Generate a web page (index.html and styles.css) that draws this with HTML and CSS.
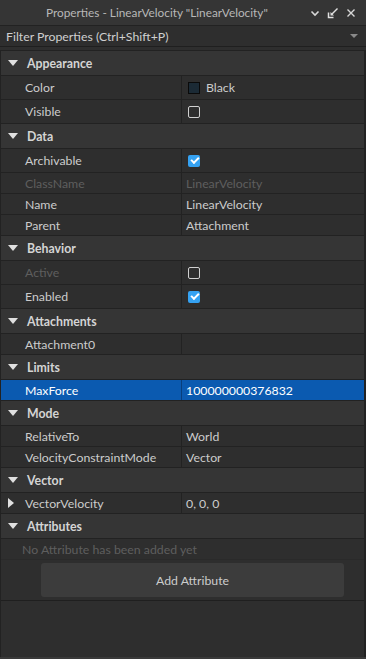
FILE: index.html
```html
<!DOCTYPE html>
<html lang="en">
<head>
    <meta charset="UTF-8">
    <meta name="viewport" content="width=device-width, initial-scale=1.0">
    <title>Properties - LinearVelocity</title>
    <link rel="stylesheet" href="styles.css">
</head>
<body>
    <div class="panel">
        <div class="titlebar">
            <span class="title">Properties - LinearVelocity "LinearVelocity"</span>
            <div class="title-icons">
                <svg width="10" height="8" viewBox="0 0 10 8"><path d="M1.5 2.5 L5 6 L8.5 2.5" fill="none" stroke="#d8d8d8" stroke-width="1.6"/></svg>
                <svg width="12" height="12" viewBox="0 0 12 12"><path d="M1.5 5.5 V10.5 H6.5" fill="none" stroke="#e0e0e0" stroke-width="1.5"/><path d="M3.5 5 V8.5 H7 Z" fill="#e0e0e0"/><path d="M4.5 7.5 L10.5 1.5" stroke="#e0e0e0" stroke-width="1.5"/></svg>
                <svg width="10" height="10" viewBox="0 0 10 10"><path d="M1.5 1.5 L8.5 8.5 M8.5 1.5 L1.5 8.5" stroke="#d8d8d8" stroke-width="1.4"/></svg>
            </div>
        </div>

        <div class="filter">
            <span>Filter Properties (Ctrl+Shift+P)</span>
            <span class="filter-arrow"></span>
        </div>

        <div class="list">
            <div class="section"><span class="caret"></span>Appearance</div>
            <div class="row tall">
                <div class="name">Color</div>
                <div class="value"><span class="swatch"></span>Black</div>
            </div>
            <div class="row tall">
                <div class="name">Visible</div>
                <div class="value"><span class="check"></span></div>
            </div>

            <div class="section"><span class="caret"></span>Data</div>
            <div class="row tall">
                <div class="name">Archivable</div>
                <div class="value"><span class="check on"></span></div>
            </div>
            <div class="row disabled">
                <div class="name">ClassName</div>
                <div class="value">LinearVelocity</div>
            </div>
            <div class="row">
                <div class="name">Name</div>
                <div class="value">LinearVelocity</div>
            </div>
            <div class="row">
                <div class="name">Parent</div>
                <div class="value">Attachment</div>
            </div>

            <div class="section"><span class="caret"></span>Behavior</div>
            <div class="row tall">
                <div class="name dim">Active</div>
                <div class="value"><span class="check"></span></div>
            </div>
            <div class="row tall">
                <div class="name">Enabled</div>
                <div class="value"><span class="check on"></span></div>
            </div>

            <div class="section"><span class="caret"></span>Attachments</div>
            <div class="row">
                <div class="name">Attachment0</div>
                <div class="value"></div>
            </div>

            <div class="section"><span class="caret"></span>Limits</div>
            <div class="row selected">
                <div class="name">MaxForce</div>
                <div class="value">100000000376832</div>
            </div>

            <div class="section"><span class="caret"></span>Mode</div>
            <div class="row">
                <div class="name">RelativeTo</div>
                <div class="value">World</div>
            </div>
            <div class="row">
                <div class="name">VelocityConstraintMode</div>
                <div class="value">Vector</div>
            </div>

            <div class="section"><span class="caret"></span>Vector</div>
            <div class="row">
                <div class="name"><span class="caret right"></span>VectorVelocity</div>
                <div class="value">0, 0, 0</div>
            </div>

            <div class="section"><span class="caret"></span>Attributes</div>
            <div class="empty-note">No Attribute has been added yet</div>
            <div class="add-row">
                <button class="add-btn">Add Attribute</button>
            </div>
        </div>
        <div class="rest"></div>
    </div>
</body>
</html>
```

FILE: styles.css
```css
html, body {
    margin: 0;
    padding: 0;
}
body {
    width: 366px;
    height: 659px;
    background: #3a3a3a;
    font-family: 'Lato', 'Noto Sans', sans-serif;
    font-size: 12.3px;
    color: #cccccc;
    overflow: hidden;
}
.panel {
    width: 366px;
    height: 657px;
    display: flex;
    flex-direction: column;
    background: #2e2e2e;
}
.titlebar {
    height: 26px;
    background: #353535;
    border-bottom: 1px solid #222222;
    display: flex;
    align-items: center;
    justify-content: space-between;
    box-sizing: border-box;
    padding: 0 10px 0 46px;
}
.title {
    color: #b8b8b8;
    font-size: 11.8px;
}
.title-icons {
    display: flex;
    align-items: center;
    gap: 7px;
}
.filter {
    height: 20px;
    background: #2e2e2e;
    border-bottom: 1px solid #1f1f1f;
    display: flex;
    align-items: center;
    justify-content: space-between;
    padding: 0 8px 0 6px;
    color: #d0d0d0;
}
.filter-arrow {
    width: 0;
    height: 0;
    border-left: 4px solid transparent;
    border-right: 4px solid transparent;
    border-top: 4px solid #8a8a8a;
}
.list {
    margin-top: 3px;
    border-top: 1px solid #222222;
    border-left: 1px solid #222222;
    border-right: 2px solid #222222;
}
.section {
    height: 24px;
    background: #353535;
    border-bottom: 1px solid #222222;
    display: flex;
    align-items: center;
    font-weight: bold;
    color: #d4d4d4;
}
.caret {
    width: 0;
    height: 0;
    border-left: 5px solid transparent;
    border-right: 5px solid transparent;
    border-top: 6px solid #e0e0e0;
    margin: 0 9px 0 7px;
}
.caret.right {
    border-top: 5px solid transparent;
    border-bottom: 5px solid transparent;
    border-left: 6px solid #e0e0e0;
    border-right: none;
    margin: 0 11px 0 -17px;
}
.row {
    height: 20px;
    display: flex;
    border-bottom: 1px solid #222222;
    background: #2e2e2e;
}
.row.tall {
    height: 23px;
}
.name {
    width: 156px;
    padding-left: 24px;
    border-right: 1px solid #222222;
    display: flex;
    align-items: center;
}
.value {
    flex: 1;
    padding-left: 4px;
    display: flex;
    align-items: center;
}
.disabled .name, .disabled .value, .name.dim {
    color: #5e5e5e;
}
.selected {
    background: #0b5ab0;
    color: #ffffff;
}
.selected .name {
    border-right-color: #093f7c;
}
.swatch {
    width: 10px;
    height: 10px;
    background: #1b2a35;
    border: 1px solid #0a0a0a;
    margin: 0 6px 0 2px;
}
.check {
    width: 10px;
    height: 10px;
    border: 1px solid #d0d0d0;
    border-radius: 2px;
    margin-left: 2px;
    position: relative;
}
.check.on {
    width: 12px;
    height: 12px;
    border: none;
    background: #35a2f2;
}
.check.on::after {
    content: "";
    position: absolute;
    left: 3px;
    top: 2px;
    width: 6px;
    height: 3px;
    border-left: 2px solid #ffffff;
    border-bottom: 2px solid #ffffff;
    transform: rotate(-45deg);
}
.empty-note {
    height: 20px;
    display: flex;
    align-items: center;
    padding-left: 21px;
    color: #5e5e5e;
    border-bottom: 1px solid #2a2a2a;
}
.add-row {
    height: 40px;
    display: flex;
    align-items: center;
    padding-left: 40px;
    border-bottom: 1px solid #1f1f1f;
}
.add-btn {
    width: 303px;
    height: 34px;
    background: #3c3c3c;
    border: none;
    border-radius: 3px;
    color: #cccccc;
    font-family: 'Lato', 'Noto Sans', sans-serif;
    font-size: 12.3px;
}
.rest {
    flex: 1;
    border-left: 1px solid #222222;
    border-right: 2px solid #222222;
}
```
